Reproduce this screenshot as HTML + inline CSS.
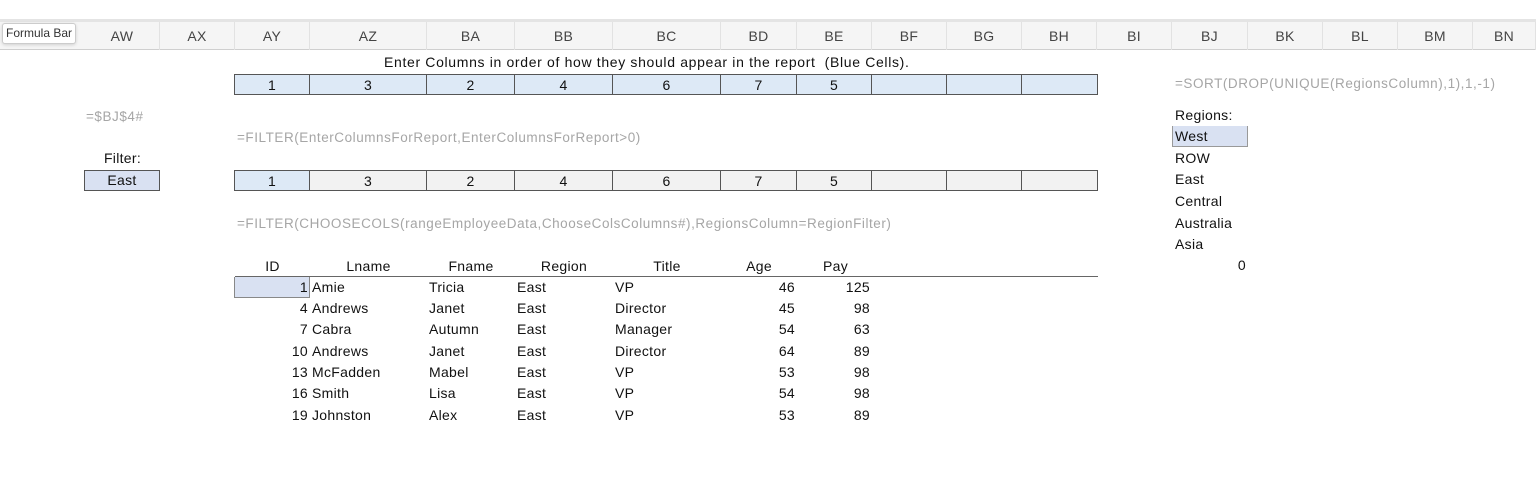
<!DOCTYPE html>
<html><head><meta charset="utf-8"><style>
*{margin:0;padding:0;box-sizing:border-box}
body{width:1536px;height:496px;background:#fff;position:relative;overflow:hidden;font-family:"Liberation Sans",sans-serif;font-size:14px;color:#111;letter-spacing:0.3px}
.a{position:absolute;white-space:nowrap;line-height:21px}
.g{color:#a6a6a6;letter-spacing:0.55px}
.hdr{position:absolute;top:22px;height:28px;line-height:28px;text-align:center;color:#444;font-size:14px;border-right:1px solid #e2e2e2}
.c{position:absolute;height:21px;line-height:20px;text-align:center;border:1px solid #555;border-left-width:0}
.r{text-align:right}
</style></head><body>
<div style="position:absolute;left:0;top:19px;width:1536px;height:3px;background:#e4e4e4"></div>
<div style="position:absolute;left:0;top:22px;width:1536px;height:28px;background:#f5f5f5;border-bottom:1px solid #cfcfcf"></div>
<div class="hdr" style="left:85px;width:75px">AW</div>
<div class="hdr" style="left:160px;width:75px">AX</div>
<div class="hdr" style="left:235px;width:75px">AY</div>
<div class="hdr" style="left:310px;width:117px">AZ</div>
<div class="hdr" style="left:427px;width:88px">BA</div>
<div class="hdr" style="left:515px;width:98px">BB</div>
<div class="hdr" style="left:613px;width:108px">BC</div>
<div class="hdr" style="left:721px;width:76px">BD</div>
<div class="hdr" style="left:797px;width:75px">BE</div>
<div class="hdr" style="left:872px;width:75px">BF</div>
<div class="hdr" style="left:947px;width:75px">BG</div>
<div class="hdr" style="left:1022px;width:75px">BH</div>
<div class="hdr" style="left:1097px;width:75px">BI</div>
<div class="hdr" style="left:1172px;width:76px">BJ</div>
<div class="hdr" style="left:1248px;width:75px">BK</div>
<div class="hdr" style="left:1323px;width:75px">BL</div>
<div class="hdr" style="left:1398px;width:75px">BM</div>
<div class="hdr" style="left:1473px;width:63px">BN</div>
<div style="position:absolute;left:2px;top:23px;width:74px;height:21px;background:#fff;border:1px solid #ccc;border-radius:3px;font-size:12px;line-height:19px;color:#333;text-align:center;letter-spacing:0;box-shadow:0 1px 3px rgba(0,0,0,.15)">Formula Bar</div>

<div class="a" style="left:384px;top:52px;font-size:14px;letter-spacing:0.66px">Enter Columns in order of how they should appear in the report&nbsp; (Blue Cells).</div>

<div style="position:absolute;left:234px;top:74px;width:864px;height:21px;border-left:1px solid #555"></div>
<div class="c" style="left:235px;top:74px;width:75px;background:#dde9f6">1</div>
<div class="c" style="left:310px;top:74px;width:117px;background:#dde9f6">3</div>
<div class="c" style="left:427px;top:74px;width:88px;background:#dde9f6">2</div>
<div class="c" style="left:515px;top:74px;width:98px;background:#dde9f6">4</div>
<div class="c" style="left:613px;top:74px;width:108px;background:#dde9f6">6</div>
<div class="c" style="left:721px;top:74px;width:76px;background:#dde9f6">7</div>
<div class="c" style="left:797px;top:74px;width:75px;background:#dde9f6">5</div>
<div class="c" style="left:872px;top:74px;width:75px;background:#dde9f6"></div>
<div class="c" style="left:947px;top:74px;width:75px;background:#dde9f6"></div>
<div class="c" style="left:1022px;top:74px;width:76px;background:#dde9f6"></div>

<div class="a g" style="left:86px;top:106px;font-size:13.5px">=$BJ$4#</div>
<div class="a g" style="left:237px;top:127px;font-size:13.5px">=FILTER(EnterColumnsForReport,EnterColumnsForReport&gt;0)</div>
<div class="a" style="left:85px;top:148px;width:75px;text-align:center">Filter:</div>
<div style="position:absolute;left:84px;top:170px;width:76px;height:21px;background:#d9e1f2;border:1px solid #555;text-align:center;line-height:19px">East</div>

<div style="position:absolute;left:234px;top:170px;width:864px;height:21px;border-left:1px solid #555"></div>
<div class="c" style="left:235px;top:170px;width:75px;background:#dde9f6">1</div>
<div class="c" style="left:310px;top:170px;width:117px;background:#f2f2f2">3</div>
<div class="c" style="left:427px;top:170px;width:88px;background:#f2f2f2">2</div>
<div class="c" style="left:515px;top:170px;width:98px;background:#f2f2f2">4</div>
<div class="c" style="left:613px;top:170px;width:108px;background:#f2f2f2">6</div>
<div class="c" style="left:721px;top:170px;width:76px;background:#f2f2f2">7</div>
<div class="c" style="left:797px;top:170px;width:75px;background:#f2f2f2">5</div>
<div class="c" style="left:872px;top:170px;width:75px;background:#f2f2f2"></div>
<div class="c" style="left:947px;top:170px;width:75px;background:#f2f2f2"></div>
<div class="c" style="left:1022px;top:170px;width:76px;background:#f2f2f2"></div>

<div class="a g" style="left:237px;top:213px;font-size:13.5px">=FILTER(CHOOSECOLS(rangeEmployeeData,ChooseColsColumns#),RegionsColumn=RegionFilter)</div>

<div class="a" style="left:235px;top:256px;width:75px;text-align:center">ID</div>
<div class="a" style="left:310px;top:256px;width:117px;text-align:center">Lname</div>
<div class="a" style="left:427px;top:256px;width:88px;text-align:center">Fname</div>
<div class="a" style="left:515px;top:256px;width:98px;text-align:center">Region</div>
<div class="a" style="left:613px;top:256px;width:108px;text-align:center">Title</div>
<div class="a" style="left:721px;top:256px;width:76px;text-align:center">Age</div>
<div class="a" style="left:797px;top:256px;width:75px;text-align:left;padding-left:26px">Pay</div>
<div style="position:absolute;left:235px;top:276px;width:863px;height:1px;background:#666"></div>
<div style="position:absolute;left:234px;top:277px;width:76px;height:21px;background:#d9e1f2;border:1px solid #888;border-top:0"></div>

<div style="position:absolute;left:0;top:277px">
<div class="a r" style="left:235px;top:0;width:73px">1</div>
<div class="a r" style="left:235px;top:21px;width:73px">4</div>
<div class="a r" style="left:235px;top:42px;width:73px">7</div>
<div class="a r" style="left:235px;top:64px;width:73px">10</div>
<div class="a r" style="left:235px;top:85px;width:73px">13</div>
<div class="a r" style="left:235px;top:106px;width:73px">16</div>
<div class="a r" style="left:235px;top:128px;width:73px">19</div>

<div class="a" style="left:312px;top:0">Amie</div>
<div class="a" style="left:312px;top:21px">Andrews</div>
<div class="a" style="left:312px;top:42px">Cabra</div>
<div class="a" style="left:312px;top:64px">Andrews</div>
<div class="a" style="left:312px;top:85px">McFadden</div>
<div class="a" style="left:312px;top:106px">Smith</div>
<div class="a" style="left:312px;top:128px">Johnston</div>

<div class="a" style="left:429px;top:0">Tricia</div>
<div class="a" style="left:429px;top:21px">Janet</div>
<div class="a" style="left:429px;top:42px">Autumn</div>
<div class="a" style="left:429px;top:64px">Janet</div>
<div class="a" style="left:429px;top:85px">Mabel</div>
<div class="a" style="left:429px;top:106px">Lisa</div>
<div class="a" style="left:429px;top:128px">Alex</div>

<div class="a" style="left:517px;top:0">East</div>
<div class="a" style="left:517px;top:21px">East</div>
<div class="a" style="left:517px;top:42px">East</div>
<div class="a" style="left:517px;top:64px">East</div>
<div class="a" style="left:517px;top:85px">East</div>
<div class="a" style="left:517px;top:106px">East</div>
<div class="a" style="left:517px;top:128px">East</div>

<div class="a" style="left:615px;top:0">VP</div>
<div class="a" style="left:615px;top:21px">Director</div>
<div class="a" style="left:615px;top:42px">Manager</div>
<div class="a" style="left:615px;top:64px">Director</div>
<div class="a" style="left:615px;top:85px">VP</div>
<div class="a" style="left:615px;top:106px">VP</div>
<div class="a" style="left:615px;top:128px">VP</div>

<div class="a r" style="left:721px;top:0;width:74px">46</div>
<div class="a r" style="left:721px;top:21px;width:74px">45</div>
<div class="a r" style="left:721px;top:42px;width:74px">54</div>
<div class="a r" style="left:721px;top:64px;width:74px">64</div>
<div class="a r" style="left:721px;top:85px;width:74px">53</div>
<div class="a r" style="left:721px;top:106px;width:74px">54</div>
<div class="a r" style="left:721px;top:128px;width:74px">53</div>

<div class="a r" style="left:797px;top:0;width:73px">125</div>
<div class="a r" style="left:797px;top:21px;width:73px">98</div>
<div class="a r" style="left:797px;top:42px;width:73px">63</div>
<div class="a r" style="left:797px;top:64px;width:73px">89</div>
<div class="a r" style="left:797px;top:85px;width:73px">98</div>
<div class="a r" style="left:797px;top:106px;width:73px">98</div>
<div class="a r" style="left:797px;top:128px;width:73px">89</div>
</div>

<div class="a g" style="left:1175px;top:73px;font-size:13.5px">=SORT(DROP(UNIQUE(RegionsColumn),1),1,-1)</div>
<div class="a" style="left:1175px;top:105px">Regions:</div>
<div style="position:absolute;left:1172px;top:126px;width:76px;height:21px;background:#d9e1f2;border:1px solid #999;border-top:0"></div>
<div class="a" style="left:1175px;top:126px">West</div>
<div class="a" style="left:1175px;top:148px">ROW</div>
<div class="a" style="left:1175px;top:169px">East</div>
<div class="a" style="left:1175px;top:191px">Central</div>
<div class="a" style="left:1175px;top:213px">Australia</div>
<div class="a" style="left:1175px;top:234px">Asia</div>
<div class="a r" style="left:1172px;top:255px;width:74px">0</div>
</body></html>
